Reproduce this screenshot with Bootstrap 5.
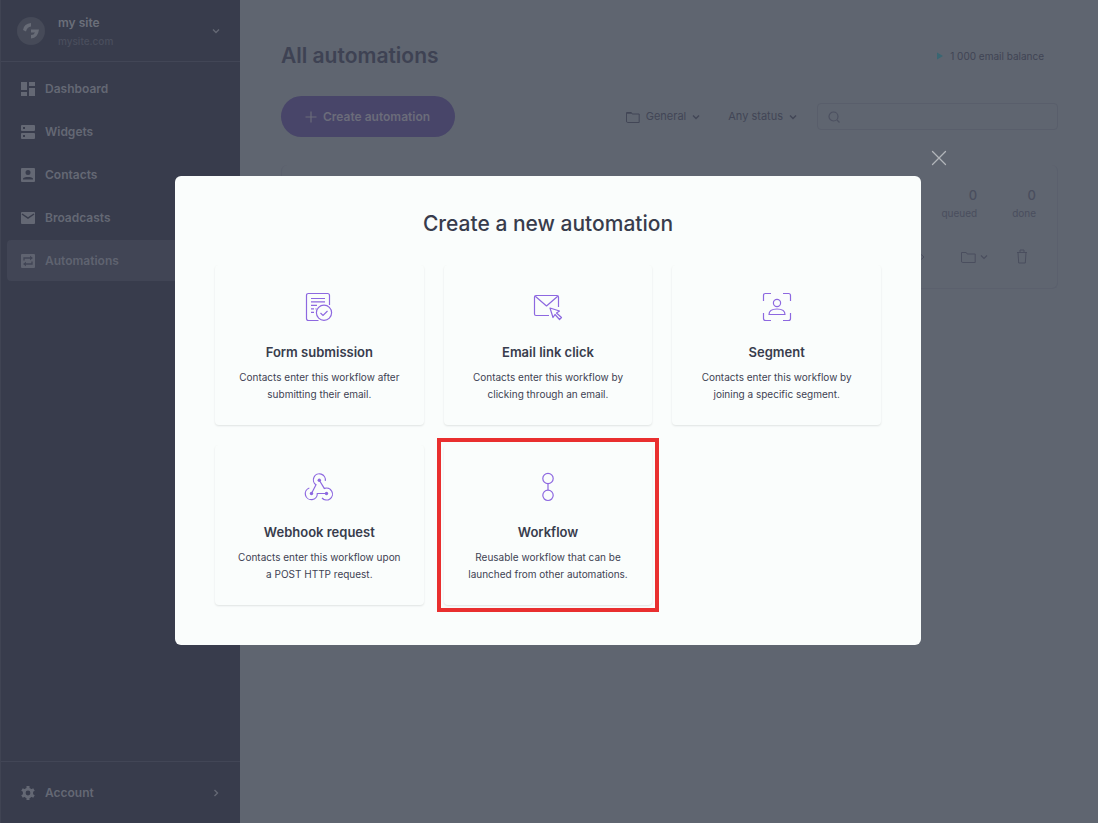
<!DOCTYPE html>
<html lang="en">
<head>
<meta charset="utf-8">
<meta name="viewport" content="width=device-width, initial-scale=1">
<title>All automations</title>
<link href="https://cdn.jsdelivr.net/npm/bootstrap@5.3.0/dist/css/bootstrap.min.css" rel="stylesheet">
<style>
  body { font-family: Inter, "Liberation Sans", sans-serif; font-size: 11px; line-height: 17px; color: #454959; background: #5f6570; }
  svg { display: block; flex: none; }
  a { color: inherit; text-decoration: none; }

  .side { width: 240px; background: #383c4c; color: #646874; border-left: 1px solid #404453; font-size: 12px; font-weight: 600; }
  .side-site { height: 62px; border-bottom: 1px solid #424656; padding: 0 20px 0 16px; gap: 13px; }
  .side-site small { font-size: 10px; line-height: 12px; color: #4a4e5d; font-weight: 500; }
  .side-site strong { font-size: 12px; line-height: 24px; font-weight: 600; color: #6b6f7a; }
  .side-menu { padding: 6px; gap: 2px; }
  .side-item { height: 41px; padding: 0 13px; gap: 9px; border-radius: 4px; }
  .side-item.active { background: #414555; color: #5f6370; }
  .side-foot { height: 62px; border-top: 1px solid #424656; padding: 0 20px; gap: 10px; }

  .main-area { padding: 36px 40px 0 41px; }
  .page-title { font-size: 21px; line-height: 40px; font-weight: 600; color: #3e4253; }
  .balance { padding-right: 14px; gap: 7px; color: #3f4454; font-size: 10px; }
  .create-btn { height: 41px; padding: 0 25px 0 23px; border-radius: 21px; background: #484569; color: #6b6c7a; font-size: 12px; font-weight: 600; border: 0; gap: 5px; }
  .filters { gap: 20px; }
  .filter-btn { background: none; border: 0; color: #424656; padding: 0; height: 28px; gap: 6px; font-size: 11px; }
  .search { width: 241px; height: 27px; border: 1px solid #595e6b; border-radius: 4px; padding: 0 10px; color: #4c5060; }
  .search input { background: none; border: 0; outline: 0; min-width: 0; color: inherit; }
  .flow-card { height: 124px; margin-top: 28px; border: 1px solid #5b606d; border-top: 0; border-radius: 6px; padding: 20px 21px 24px; color: #4a4e5e; font-size: 10px; }
  .stats { gap: 35px; }
  .stats b { font-size: 13px; line-height: 20px; font-weight: 500; }
  .tools { gap: 28px; padding-right: 8px; }
  .plain-btn { background: none; border: 0; padding: 0; color: inherit; }

  .picker-layer { padding: 0 2px 2px 0; }
  .modal-dialog.picker { max-width: 746px; }
  .picker .modal-content { background: #fafdfc; border: 0; border-radius: 6px; padding: 30px 40px 40px; color: #383c4c; }
  .picker h2 { font-size: 21px; line-height: 36px; font-weight: 500; margin-bottom: 23px; text-align: center; }
  .close-btn { position: absolute; top: -26px; right: -26px; color: #b2b5ba; }
  .trigger-grid { display: grid; grid-template-columns: repeat(3, 1fr); gap: 20px; }
  .trigger { position: relative; height: 160px; padding: 5px 0 0; border: 0; border-radius: 4px; background: #fafdfc; box-shadow: 0 1px 2px #dfe3e3; color: #3e4253; font-size: 10px; line-height: 17px; clip-path: inset(0 -3px -4px -3px); }
  .trigger h3 { font-size: 13px; line-height: 20px; font-weight: 600; margin: 20px 0 7px; color: #383c4c; }
  .trigger svg { color: #8d68e0; margin: 0 auto; }
  .trigger.picked { clip-path: none; }
  .trigger.picked::after { content: ""; position: absolute; inset: -7px; border: 4px solid #e92f2f; }
</style>
</head>
<body>
<div class="d-flex min-vh-100">
  <aside class="side d-flex flex-column flex-shrink-0">
    <div class="side-site d-flex align-items-center">
      <svg width="28" height="28" viewBox="0 0 28 28"><circle cx="14" cy="14" r="14" fill="#464a58"/><path d="M6 13q1-6.500 8-7v3.500q-4 .5-5 5zM14 12.500h8q-1 8.500-8 9v-3.500q3 0 4-2.500h-4z" fill="#676b76"/></svg>
      <div class="d-flex flex-column flex-grow-1 pb-1">
        <strong>my site</strong>
        <small>mysite.com</small>
      </div>
      <svg width="8" height="8" viewBox="0 0 8 8" fill="none" stroke="currentColor" stroke-width="1.4"><path d="M1 2.500l3 3 3-3"/></svg>
    </div>
    <nav class="side-menu d-flex flex-column flex-grow-1">
      <a href="#" class="side-item d-flex align-items-center">
        <svg width="16" height="16" viewBox="0 0 16 16" fill="currentColor"><path d="M1 1h6v8H1zM1 11h6v4H1zM9 1h6v4H9zM9 7h6v8H9z"/></svg>Dashboard</a>
      <a href="#" class="side-item d-flex align-items-center">
        <svg width="16" height="16" viewBox="0 0 16 16" fill="currentColor" fill-rule="evenodd"><path d="M2 1h12q1 0 1 1v4q0 1-1 1H2Q1 7 1 6V2q0-1 1-1zM3 3v2h2V3zM2 9h12q1 0 1 1v4q0 1-1 1H2q-1 0-1-1v-4q0-1 1-1zm1 2v2h2v-2z"/></svg>Widgets</a>
      <a href="#" class="side-item d-flex align-items-center">
        <svg width="16" height="16" viewBox="0 0 16 16" fill="currentColor" fill-rule="evenodd"><path d="M2 1h12q1 0 1 1v12q0 1-1 1H2q-1 0-1-1V2q0-1 1-1zM8 3a2.5 2.5 0 1 0 0 5 2.5 2.5 0 0 0 0-5zM3 12.500h10v-.8C13 9.500 3 9.500 3 11.700z"/></svg>Contacts</a>
      <a href="#" class="side-item d-flex align-items-center">
        <svg width="16" height="16" viewBox="0 0 16 16"><rect x="1" y="2" width="14" height="12" rx="1" fill="currentColor"/><path d="M2 4l6 4 6-4" fill="none" stroke="#383c4c" stroke-width="1.500"/></svg>Broadcasts</a>
      <a href="#" class="side-item active d-flex align-items-center" aria-current="page">
        <svg width="16" height="16" viewBox="0 0 16 16"><rect x="1" y="1" width="14" height="14" rx="1" fill="currentColor"/><path d="M4 7.500V5h7M12 8.500V11H5" fill="none" stroke="#414555" stroke-width="1.300"/><path d="M10 2.700L13 5l-3 2.300zM6 8.700L3 11l3 2.300z" fill="#414555"/></svg>Automations</a>
    </nav>
    <a href="#" class="side-foot d-flex align-items-center">
      <svg width="14" height="14" viewBox="0 0 14 14" fill="none" stroke="currentColor"><circle cx="7" cy="7" r="3.800" stroke-width="2.800"/><path d="M7 0v3M7 11v3M1 3.500l2.400 1.400M10.600 9.100L13 10.500M1 10.500l2.400-1.400M10.600 4.900L13 3.500" stroke-width="3"/></svg>
      <span class="flex-grow-1">Account</span>
      <svg width="8" height="8" viewBox="0 0 8 8" fill="none" stroke="currentColor" stroke-width="1.400"><path d="M2.500 1l3 3-3 3"/></svg>
    </a>
  </aside>

  <main class="main-area flex-grow-1">
    <div class="d-flex align-items-center justify-content-between">
      <h1 class="page-title m-0">All automations</h1>
      <span class="balance d-flex align-items-center"><svg width="6" height="8" viewBox="0 0 6 8"><path d="M0 .5l6 3.500-6 3.500z" fill="#3a6672"/></svg>1 000 email balance</span>
    </div>
    <div class="d-flex align-items-center justify-content-between mt-3 pt-1">
      <button type="button" class="create-btn d-flex align-items-center">
        <svg width="14" height="14" viewBox="0 0 14 14" stroke="currentColor" stroke-width="1.200"><path d="M7 1.500v11M1.500 7h11"/></svg>Create automation</button>
      <div class="filters d-flex align-items-center">
        <button type="button" class="filter-btn d-flex align-items-center me-2"><svg width="14" height="12" viewBox="0 0 14 12" fill="none" stroke="currentColor"><path d="M.5 10V1.500h4.700l1 1.500h7v8.500H1.500q-1 0-1-1.500z"/><path d="M1 2h4.500" stroke-width="1.500"/></svg>General<svg width="8" height="8" viewBox="0 0 8 8" fill="none" stroke="currentColor" stroke-width="1.400"><path d="M1 2.500l3 3 3-3"/></svg></button>
        <button type="button" class="filter-btn d-flex align-items-center">Any status<svg width="8" height="8" viewBox="0 0 8 8" fill="none" stroke="currentColor" stroke-width="1.400"><path d="M1 2.500l3 3 3-3"/></svg></button>
        <label class="search d-flex align-items-center"><svg width="12" height="12" viewBox="0 0 12 12" fill="none" stroke="currentColor" stroke-width="1.200"><circle cx="5.500" cy="5.500" r="4.500"/><path d="M9 9l2.500 2.500"/></svg><input type="search" class="flex-grow-1" aria-label="Search"></label>
      </div>
    </div>
    <section class="flow-card d-flex flex-column justify-content-between">
      <div class="stats d-flex justify-content-end text-end">
        <div class="d-flex flex-column"><b>0</b><span>queued</span></div>
        <div class="d-flex flex-column"><b>0</b><span>done</span></div>
      </div>
      <div class="tools d-flex justify-content-end align-items-center">
        <button type="button" class="plain-btn me-2" aria-label="Preview"><svg width="12" height="12" viewBox="0 0 12 12" fill="none" stroke="currentColor"><path d="M1 6q5-6 10 0-5 6-10 0z"/></svg></button>
        <button type="button" class="plain-btn d-flex align-items-center gap-1" aria-label="Move to folder"><svg width="15" height="12" viewBox="0 0 15 12" fill="none" stroke="currentColor"><path d="M.5 10V1.500h4.700l1 1.500h8v8.500H1.500q-1 0-1-1.500z"/></svg><svg width="8" height="8" viewBox="0 0 8 8" fill="none" stroke="currentColor" stroke-width="1.200"><path d="M1 2.500l3 3 3-3"/></svg></button>
        <button type="button" class="plain-btn" aria-label="Delete"><svg width="12" height="15" viewBox="0 0 12 15" fill="none" stroke="currentColor"><path d="M1 3.500h10M4 3V1h4v2M2 3.500l.7 10.500h6.600L10 3.500"/></svg></button>
      </div>
    </section>
  </main>
</div>

<div class="modal show d-block picker-layer" tabindex="-1" role="dialog" aria-labelledby="picker-title">
  <div class="modal-dialog modal-dialog-centered picker">
    <div class="modal-content">
      <button type="button" class="close-btn plain-btn" aria-label="Close"><svg width="16" height="16" viewBox="0 0 16 16" fill="none" stroke="currentColor" stroke-width="1.300" stroke-linecap="round"><path d="M1.500 1.500l13 13M14.500 1.500l-13 13"/></svg></button>
      <h2 id="picker-title">Create a new automation</h2>
      <div class="trigger-grid">
        <button type="button" class="trigger d-block">
          <svg width="30" height="30" viewBox="0 0 30 30" fill="none" stroke="currentColor" stroke-width="1.200"><path d="M14.500 28.500H4.500q-2 0-2-2v-23q0-2 2-2h19q2 0 2 2V13"/><path d="M7 6.500h14M7 9.800h14M7 13.300h6M7 16.800h3M11.500 16.800h1M7 20.300h3"/><circle cx="20" cy="20.800" r="7.600"/><path d="M16.500 21l2.500 2.500 4.500-4.500"/></svg>
          <h3>Form submission</h3>
          Contacts enter this workflow after<br>submitting their email.
        </button>
        <button type="button" class="trigger d-block">
          <svg width="30" height="30" viewBox="0 0 30 30" fill="none" stroke="currentColor" stroke-width="1.200" stroke-linejoin="round"><path d="M25.500 15V5q0-1.500-1.500-1.500H3Q1.500 3.500 1.500 5v17q0 1.500 1.500 1.500h13M2 4l11.500 10L25 4"/><path d="M17 16l9.500 3-3 2 5 4.500-2 2-4.500-5-2 3z"/></svg>
          <h3>Email link click</h3>
          Contacts enter this workflow by<br>clicking through an email.
        </button>
        <button type="button" class="trigger d-block">
          <svg width="30" height="30" viewBox="0 0 30 30" fill="none" stroke="currentColor" stroke-width="1.200"><path d="M1.500 9V3.500q0-2 2-2H9M21 1.500h5.500q2 0 2 2V9M28.500 21v5.500q0 2-2 2H21M9 28.500H3.500q-2 0-2-2V21"/><circle cx="15" cy="11" r="3.600"/><path d="M7 22.500q0-5.500 8-5.500t8 5.500z" stroke-linejoin="round"/></svg>
          <h3>Segment</h3>
          Contacts enter this workflow by<br>joining a specific segment.
        </button>
        <button type="button" class="trigger d-block">
          <svg width="30" height="30" viewBox="0 0 30 30" fill="none" stroke="currentColor" stroke-width="1.200"><path d="M21.300 8.800A6 6 0 1 0 12 12.800L7.500 21.500M15.300 8.200l5 8.200A6 6 0 1 1 18 26M5.300 16A6 6 0 1 0 13.300 21.500H22.500"/><g fill="currentColor" stroke="none"><circle cx="15.300" cy="8.200" r="1.700"/><circle cx="7.500" cy="21.500" r="1.700"/><circle cx="22.500" cy="21.500" r="1.700"/></g></svg>
          <h3>Webhook request</h3>
          Contacts enter this workflow upon<br>a POST HTTP request.
        </button>
        <button type="button" class="trigger picked d-block">
          <svg width="30" height="30" viewBox="0 0 30 30" fill="none" stroke="currentColor" stroke-width="1.200"><circle cx="15" cy="6.500" r="5.200"/><circle cx="15" cy="23.300" r="5.200"/><path d="M15 11.700v6.400"/></svg>
          <h3>Workflow</h3>
          Reusable workflow that can be<br>launched from other automations.
        </button>
      </div>
    </div>
  </div>
</div>
<script src="https://cdn.jsdelivr.net/npm/bootstrap@5.3.0/dist/js/bootstrap.bundle.min.js"></script>
</body>
</html>
